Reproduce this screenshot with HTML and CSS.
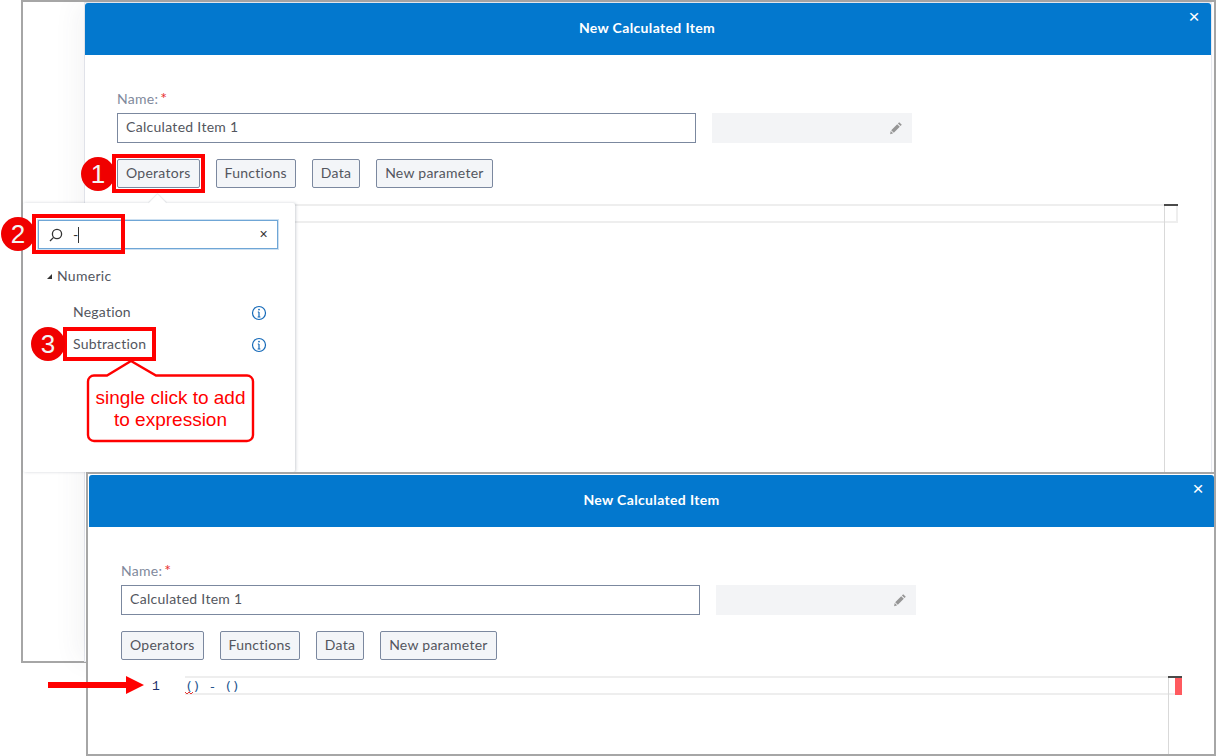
FILE: index.html
```html
<!DOCTYPE html>
<html lang="en">
<head>
<meta charset="utf-8">
<title>New Calculated Item</title>
<link rel="stylesheet" href="styles.css">
</head>
<body>
<div class="canvas">

  <section class="frame frame-back">
    <div class="dialog dialog-back">
      <header class="dialog-head"><h1 class="dialog-title">New Calculated Item</h1><span class="close">×</span></header>
      <div class="dialog-body">
        <div class="label">Name:<span class="req">*</span></div>
        <div class="fields">
          <div class="input">Calculated Item 1</div>
          <div class="format">
            <svg class="pencil" viewBox="0 0 14 14"><path d="M10.2 1.2l2.6 2.6-1.3 1.3-2.6-2.6zM8.2 3.2l2.6 2.6-6 6-2.6-2.6zM1.7 9.9l2.4 2.4-1.2.4-1.8.6z"/></svg>
          </div>
        </div>
        <div class="buttons">
          <div class="btn">Operators</div><div class="btn">Functions</div><div class="btn">Data</div><div class="btn">New parameter</div>
        </div>
        <div class="editor">
          <div class="gutter"></div>
          <div class="lines"></div>
          <div class="overview"><div class="overview-row"></div></div>
        </div>
      </div>
    </div>
  </section>

  <aside class="popup">
    <span class="popup-arrow"></span>
    <div class="search">
      <svg class="search-icon" viewBox="0 0 14 14"><circle cx="8" cy="6" r="4.6"/><path d="M4.6 9.4L1 13"/></svg>
      <span class="search-text">-</span><span class="caret"></span>
      <span class="search-clear">×</span>
    </div>
    <div class="tree-head"><span class="twisty"></span>Numeric</div>
    <div class="tree-item"><span class="tree-label">Negation</span>
      <svg class="info" viewBox="0 0 16 16"><circle cx="8" cy="8" r="6.5"/><path d="M8 7v5M6.6 12h2.8M6.8 7H8"/><circle class="dot" cx="8" cy="4.6" r="0.9"/></svg>
    </div>
    <div class="tree-item"><span class="tree-label">Subtraction</span>
      <svg class="info" viewBox="0 0 16 16"><circle cx="8" cy="8" r="6.5"/><path d="M8 7v5M6.6 12h2.8M6.8 7H8"/><circle class="dot" cx="8" cy="4.6" r="0.9"/></svg>
    </div>
  </aside>

  <div class="mark mark-1"></div>
  <div class="mark mark-2"></div>
  <div class="mark mark-3"></div>
  <div class="step step-1">1</div>
  <div class="step step-2">2</div>
  <div class="step step-3">3</div>

  <div class="callout">
    <svg class="callout-shape" viewBox="0 0 172 84"><path d="M9 15.5H22L46 1L71 15.5H162a6 6 0 0 1 6 6V75a6 6 0 0 1-6 6H9a6 6 0 0 1-6-6V21.5a6 6 0 0 1 6-6Z"/></svg>
    <p class="callout-text">single click to add<br>to expression</p>
  </div>

  <section class="frame frame-front">
    <div class="dialog dialog-front">
      <header class="dialog-head"><h1 class="dialog-title">New Calculated Item</h1><span class="close">×</span></header>
      <div class="dialog-body">
        <div class="label">Name:<span class="req">*</span></div>
        <div class="fields">
          <div class="input">Calculated Item 1</div>
          <div class="format">
            <svg class="pencil" viewBox="0 0 14 14"><path d="M10.2 1.2l2.6 2.6-1.3 1.3-2.6-2.6zM8.2 3.2l2.6 2.6-6 6-2.6-2.6zM1.7 9.9l2.4 2.4-1.2.4-1.8.6z"/></svg>
          </div>
        </div>
        <div class="buttons">
          <div class="btn">Operators</div><div class="btn">Functions</div><div class="btn">Data</div><div class="btn">New parameter</div>
        </div>
        <div class="editor">
          <div class="gutter"><span class="line-no">1</span></div>
          <div class="lines"><code class="code">() - ()</code>
            <svg class="squiggle" viewBox="0 0 9 4"><path d="M0 1l2 2 2-2 2 2 2-2"/></svg>
          </div>
          <div class="overview"><div class="overview-row"></div><span class="error-mark"></span></div>
        </div>
      </div>
    </div>
  </section>

  <svg class="pointer" viewBox="0 0 96 18"><path d="M0 6H78V0L96 9L78 18V12H0Z"/></svg>
</div>
</body>
</html>
```
FILE: styles.css
```css
* { box-sizing: border-box; }
html, body { margin: 0; padding: 0; background: #fff; }
.canvas {
  position: relative;
  width: 1216px;
  height: 756px;
  overflow: hidden;
  font-family: Lato, "Open Sans", sans-serif;
  font-size: 14px;
  letter-spacing: 0.3px;
  color: #53565e;
}

/* Windows */
.frame {
  position: absolute;
  display: flex;
  background: #fff;
  border: 2px solid #a6a6a6;
}
.frame-back { left: 21px; top: 0; width: 1195px; height: 663px; padding: 1px 3px 0 62px; }
.frame-front { left: 86px; top: 472px; width: 1130px; height: 284px; padding: 1px 0 0 1px; }

.dialog {
  flex: 1;
  display: flex;
  flex-direction: column;
  min-width: 0;
  background: #fff;
}
.dialog-back { box-shadow: -8px 0 24px rgba(60, 70, 90, 0.06), 0 0 0 1px #e8eaf0; }
.dialog-head {
  position: relative;
  flex: none;
  height: 52px;
  display: flex;
  align-items: center;
  justify-content: center;
  padding-bottom: 3px;
  background: #0378ce;
  border-radius: 3px 3px 0 0;
}
.dialog-title { margin: 0; font-size: 14px; font-weight: 700; letter-spacing: 0.35px; color: #fff; }
.dialog-back .dialog-title { margin-right: 2px; }
.close {
  position: absolute;
  top: 4px;
  right: 10px;
  font-family: "Liberation Sans", sans-serif;
  font-size: 19px;
  line-height: 19px;
  color: #fff;
}
.dialog-back .close { right: 11px; }
.dialog-body {
  flex: 1;
  min-height: 0;
  display: flex;
  flex-direction: column;
  padding: 37px 32px 0;
}
.dialog-back .dialog-body { padding-right: 33px; }

.label { height: 21px; line-height: 14px; color: #7f899c; }
.req { margin-left: 2px; font-size: 16px; line-height: 0; color: #e8312f; }
.fields { display: flex; gap: 16px; }
.input {
  width: 579px;
  height: 30px;
  padding: 0 8px;
  line-height: 26px;
  background: #fff;
  border: 1px solid #7b889f;
}
.format {
  width: 200px;
  height: 30px;
  display: flex;
  align-items: center;
  justify-content: flex-end;
  padding-right: 9px;
  background: #f3f4f6;
}
.pencil { width: 14px; height: 14px; fill: #969696; }
.buttons { display: flex; gap: 16px; margin-top: 16px; }
.btn {
  height: 29px;
  padding: 0 8px;
  line-height: 25px;
  letter-spacing: 0.26px;
  background: #f3f5f8;
  border: 1px solid #7b889f;
  border-radius: 2px;
}

/* Expression editor */
.editor { flex: 1; min-height: 0; display: flex; margin-top: 16px; letter-spacing: 0; }
.gutter { width: 64px; flex: none; position: relative; }
.line-no {
  position: absolute;
  left: 31px;
  top: 3px;
  font-family: "Liberation Mono", monospace;
  font-size: 13px;
  line-height: 16px;
  color: #1b2f6b;
}
.lines {
  position: relative;
  flex: 1;
  height: 19px;
  border-top: 2px solid #eeeeee;
  border-bottom: 2px solid #eeeeee;
}
.code {
  display: block;
  font-family: "DejaVu Sans Mono", monospace;
  font-size: 13px;
  line-height: 17px;
  white-space: pre;
  color: #24558f;
}
.squiggle {
  position: absolute;
  left: 0;
  top: 13px;
  width: 9px;
  height: 4px;
  fill: none;
  stroke: #e53935;
  stroke-width: 1;
}
.overview {
  position: relative;
  width: 14px;
  flex: none;
  border-left: 1px solid #d9d9d9;
}
.overview::before {
  content: "";
  position: absolute;
  left: -1px;
  right: 0;
  top: 0;
  height: 2px;
  background: #4a4a4a;
  z-index: 1;
}
.overview-row { height: 19px; border-bottom: 2px solid #eeeeee; border-right: 2px solid #eeeeee; }
.error-mark {
  position: absolute;
  left: 6px;
  top: 0;
  width: 7px;
  height: 19px;
  background: #ff5a5f;
}

/* Operators popup */
.popup {
  position: absolute;
  left: 23px;
  top: 203px;
  width: 272px;
  height: 269px;
  background: #fff;
  border-radius: 2px;
  box-shadow: 1px 0 3px rgba(60, 70, 90, 0.25);
}
.popup-arrow {
  position: absolute;
  left: 128px;
  top: -6px;
  width: 13px;
  height: 13px;
  background: #fff;
  transform: rotate(45deg);
  box-shadow: -1px -1px 1px rgba(60, 70, 90, 0.12);
}
.search {
  position: relative;
  display: flex;
  align-items: center;
  height: 29px;
  margin: 17px 17px 0 15px;
  padding-left: 10px;
  border: 1px solid #6fa6d6;
  box-shadow: 0 0 0 1px rgba(111, 166, 214, 0.35);
}
.search-icon { width: 14px; height: 14px; fill: none; stroke: #333; stroke-width: 1.3; }
.search-text { margin-left: 10px; letter-spacing: 0; color: #333; }
.caret { width: 1px; height: 16px; background: #333; }
.search-clear {
  position: absolute;
  right: 9px;
  top: 3px;
  font-family: "Liberation Sans", sans-serif;
  font-size: 14px;
  line-height: 20px;
  color: #333;
}
.tree-head { display: flex; align-items: center; margin: 16px 0 0 24px; height: 20px; }
.twisty {
  width: 0;
  height: 0;
  margin-right: 5px;
  margin-top: 2px;
  border-style: solid;
  border-width: 0 0 5px 5px;
  border-color: transparent transparent #333 transparent;
}
.tree-item {
  display: flex;
  align-items: center;
  justify-content: space-between;
  height: 32px;
  padding: 0 28px 0 50px;
}
.tree-label { padding-bottom: 4px; letter-spacing: 0.22px; }
.tree-head + .tree-item { margin-top: 12px; }
.info { width: 16px; height: 16px; fill: none; stroke: #1469b8; stroke-width: 1.2; }
.info .dot { fill: #1469b8; stroke: none; }

/* Annotations */
.mark { position: absolute; border: 4px solid #ff0000; }
.mark-1 { left: 112px; top: 154px; width: 93px; height: 39px; }
.mark-2 { left: 32px; top: 214px; width: 93px; height: 40px; }
.mark-3 { left: 63px; top: 327px; width: 93px; height: 34px; }
.step {
  position: absolute;
  width: 34px;
  height: 34px;
  border-radius: 50%;
  background: #f00000;
  color: #f4f4f4;
  font-family: "Liberation Sans", sans-serif;
  font-size: 26px;
  letter-spacing: 0;
  line-height: 34px;
  text-align: center;
}
.step-1 { left: 81px; top: 157px; }
.step-2 { left: 1px; top: 217px; }
.step-3 { left: 31px; top: 327px; }
.callout { position: absolute; left: 85px; top: 360px; width: 171px; height: 84px; }
.callout-shape {
  position: absolute;
  inset: 0;
  width: 172px;
  height: 84px;
  fill: #fff;
  stroke: #ff0000;
  stroke-width: 2.4;
}
.callout-text {
  position: relative;
  margin: 0;
  padding-top: 27px;
  text-align: center;
  font-family: "Liberation Sans", sans-serif;
  font-size: 19px;
  letter-spacing: 0;
  line-height: 22px;
  color: #ff0000;
}
.pointer { position: absolute; left: 48px; top: 676px; width: 96px; height: 18px; fill: #ff0000; }
```
